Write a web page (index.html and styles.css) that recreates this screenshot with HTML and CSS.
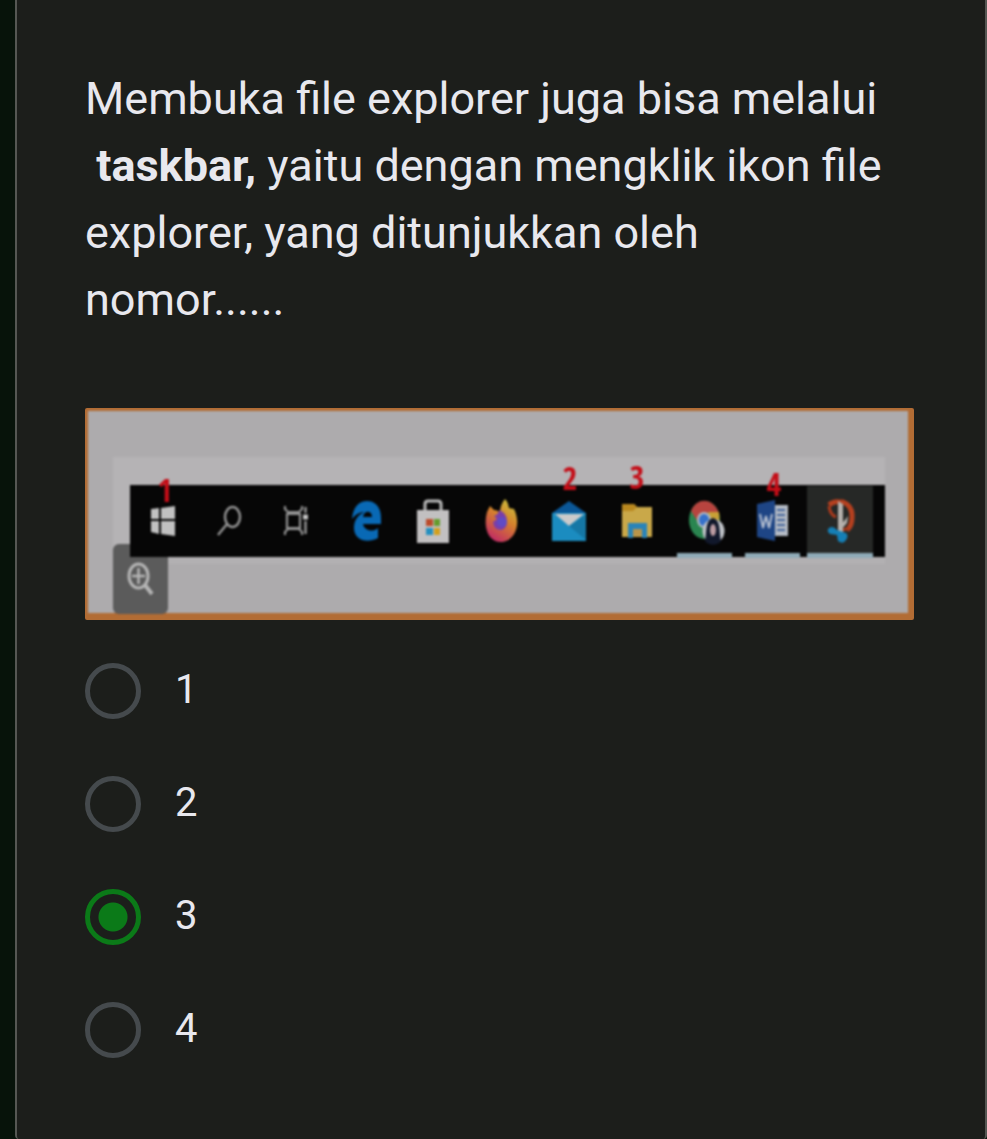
FILE: index.html
```html
<!DOCTYPE html>
<html lang="id">
<head>
<meta charset="utf-8">
<meta name="viewport" content="width=device-width, initial-scale=1">
<title>Soal File Explorer</title>
<link rel="stylesheet" href="styles.css">
</head>
<body>
<main class="card">
<form>
<fieldset class="question">
<legend class="question-text">Membuka file explorer juga bisa melalui &nbsp;<b>taskbar,</b> yaitu dengan mengklik ikon file explorer, yang ditunjukkan oleh nomor......</legend>
<svg class="figure" viewBox="85 408 829 212" role="img" aria-label="Taskbar Windows dengan ikon bernomor 1 sampai 4">
  <defs>
    <filter id="soft" x="-5%" y="-5%" width="110%" height="110%" color-interpolation-filters="sRGB"><feGaussianBlur stdDeviation="1"/></filter>
    <linearGradient id="fox" x1="0.8" y1="0" x2="0.3" y2="1"><stop offset="0" stop-color="#c9c33e"/><stop offset=".45" stop-color="#d6822c"/><stop offset="1" stop-color="#c02a66"/></linearGradient>
  </defs>
  <rect x="85" y="408" width="829" height="212" rx="2" fill="#b26c34"/>
  <g filter="url(#soft)">
    <rect x="88" y="411" width="820" height="202" fill="#adabad"/>
    <rect x="113" y="457" width="772" height="106" fill="#b5b3b5"/>
    <rect x="130" y="556" width="755" height="8" fill="#b2b0b2"/>
    <rect x="113" y="544" width="55" height="70" rx="6" fill="#5b5b5b"/>
    <rect x="130" y="485" width="755" height="72" fill="#060606"/>
    <rect x="807" y="486" width="66" height="67" fill="#262826"/>
    <path d="M677 553h55v5h-55zM745 553h55v5h-55zM807 553h66v5h-66z" fill="#8fabb7"/>
    <g fill="none" stroke="#b5b5b5">
      <ellipse cx="138.500" cy="576" rx="9.500" ry="12" stroke-width="3"/>
      <path d="M145 585l7 9" stroke-width="4"/>
      <path d="M138.500 568v16M132 576h13" stroke-width="2.500"/>
    </g>
    <path d="M151 509l8-1v11h-8zM161 508l14-2v13h-14zM151 521h8v13l-8-2zM161 521h14v15l-14-2z" fill="#c1c1c1"/>
    <g fill="none" stroke="#929292" stroke-width="2.500">
      <ellipse cx="232.500" cy="517" rx="7.500" ry="10"/>
      <path d="M227 524l-9 11"/>
      <path d="M287 514h13v14h-13zM285 506v3l3 3h11l3-3v-3M285 535v-3l3-3h11l3 3v3" stroke-width="2.200"/>
      <path d="M305.500 507v6M305.500 521v13" stroke-width="2.500"/>
      <path d="M303 517h5" stroke="#c4c4c4" stroke-width="5"/>
    </g>
    <path d="M352 519c1-12 7-18 15-18 9 0 14 7 14 17v6h-18c1 6 9 9 15 4v10c-11 6-24 2-24-10 0-8 4-13 10-16-4 0-8 2-12 7zM363 517h9c0-7-8-7-9 0z" fill="#0969b5" fill-rule="evenodd"/>
    <path d="M425 511v-7q0-3 3-3h10q3 0 3 3v7" fill="none" stroke="#b9b9b9" stroke-width="3"/>
    <path d="M417 510h32v33h-32z" fill="#c2c0c1"/>
    <path d="M426 519h7v7h-7z" fill="#bc4b29"/><path d="M434 519h6v7h-6z" fill="#659c2d"/><path d="M426 528h7v7h-7z" fill="#238fbf"/><path d="M434 528h6v7h-6z" fill="#d2a01d"/>
    <path d="M487 512l3-6 4 4q4 0 6 3 0-8 5-14 3 3 4 9l5 1c8 16 0 33-13 33-13 0-18-15-14-30z" fill="url(#fox)"/>
    <path d="M494 516q5-2 5-6 8 3 8 11 0 8-6 9-7 0-8-8l4-3z" fill="#793eaa"/>
    <circle cx="502" cy="522" r="5" fill="#614bc4"/>
    <path d="M552 513l17-12 17 12v5h-34z" fill="#0b5797"/><path d="M552 513h34v28h-34z" fill="#1b8cc0"/><path d="M555 514h29l-15 12z" fill="#cbcaca"/><path d="M569 526l17 14v-26z" fill="#1577a5"/>
    <path d="M622 504h12l3 3h15v30h-30z" fill="#c9a849"/><path d="M622 504h12l3 3-4 4h-11z" fill="#b9881f"/><path d="M628 523h19v15h-5v-9h-9v9h-5z" fill="#2a84b8"/><path d="M633 529h9v7h-9z" fill="#b8944a"/>
    <ellipse cx="704.500" cy="520" rx="15.500" ry="19" fill="#2a8550"/>
    <path d="M691 511c6-15 23-13 28 2h-15l-6 9z" fill="#b8443f"/>
    <path d="M708 512h11c2 12-3 25-13 27l5-15z" fill="#c8a036"/>
    <ellipse cx="704" cy="520" rx="7" ry="8" fill="#b5bbc2"/><ellipse cx="704" cy="520" rx="5" ry="6" fill="#3571ca"/>
    <ellipse cx="713.500" cy="531" rx="11" ry="12" fill="#c0c3c8"/>
    <path d="M705 541c2-9 0-21 8-23 8 2 6 14 8 23-4 5-12 5-16 0z" fill="#11182b"/><ellipse cx="713" cy="530" rx="3" ry="6" fill="#bd9da3"/>
    <path d="M774 505h14v31h-14z" fill="#b4bac4"/><path d="M777 510h8M777 515h8M777 520h8M777 525h8M777 530h8" stroke="#43649b" stroke-width="2"/>
    <path d="M757 504l18-4v41l-18-4z" fill="#1e4585"/><path d="M760 514l3 14 3-12 3 12 3-14" fill="none" stroke="#b5bfd0" stroke-width="2"/>
    <path d="M829 505q5-4 10-3l4 0q10 4 9 16 0 8-5 12" fill="none" stroke="#b5401f" stroke-width="5"/>
    <path d="M829 506q1 9 7 11M843 530l6-2" fill="none" stroke="#a83a1c" stroke-width="3"/>
    <path d="M838 501l5 3v28h-5zM841 525l7-9-1 7-6 7z" fill="#b5b0ac"/>
    <path d="M829 528q4-3 8 2l9 3q3 3 0 7-3 5-8 1l-1-6-7-1q-4-3-1-6z" fill="#157fb5"/>
    <g class="marks" text-anchor="middle">
      <text x="165" y="502">1</text><text x="570" y="490">2</text><text x="637" y="489">3</text><text x="774" y="496">4</text>
    </g>
  </g>
</svg>
<div class="options">
  <label class="option"><input type="radio" name="nomor" value="1"><span>1</span></label>
  <label class="option"><input type="radio" name="nomor" value="2"><span>2</span></label>
  <label class="option"><input type="radio" name="nomor" value="3" checked><span>3</span></label>
  <label class="option"><input type="radio" name="nomor" value="4"><span>4</span></label>
</div>
</fieldset>
</form>
</main>
</body>
</html>
```
FILE: styles.css
```css
* { box-sizing: border-box; }
body {
  margin: 0;
  padding-left: 15px;
  background: #07130a;
  color: #e8e8ee;
  font-family: Roboto, "Noto Sans", sans-serif;
}
.card {
  min-height: 100vh;
  padding: 65px 71px 64px 68px;
  background: #1c1e1b;
  border: 2px solid #555753;
  border-width: 0 2px;
  border-radius: 0 0 4px 4px;
}
.question { min-width: 0; margin: 0; padding: 0; border: 0; }
.question-text {
  padding: 0 16px 0 0;
  font-size: 45px;
  line-height: 67px;
}
.figure { display: block; width: 100%; height: auto; margin-top: 75px; }
.marks { fill: #c40d17; font: bold 32px "Liberation Sans Narrow", "Open Sans Condensed", "Roboto Condensed", "Open Sans", sans-serif; }
.options { display: flex; flex-direction: column; gap: 57px; margin-top: 43px; }
.option { display: flex; align-items: center; gap: 34px; font-size: 40px; line-height: 52px; }
.option span { padding-bottom: 2px; }
.option input {
  flex: none;
  appearance: none;
  width: 56px;
  height: 56px;
  margin: 0;
  border: 5px solid #454a4d;
  border-radius: 50%;
}
.option input:checked {
  border-color: #0b7a18;
  background: radial-gradient(circle, #0b7a18 14px, transparent 15px);
}
```
